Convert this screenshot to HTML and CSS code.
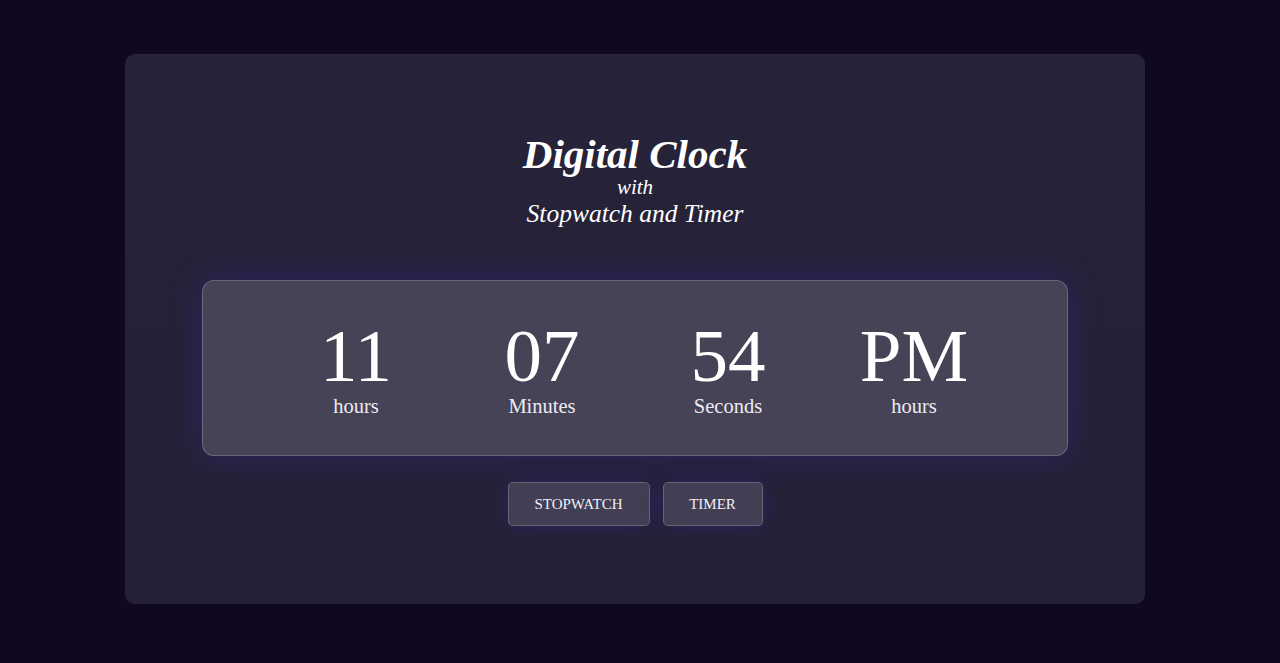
FILE: index.html
```html
<!DOCTYPE html>
<html lang="en">
<head>
<meta charset="utf-8">
<title>Digital Clock</title>
<link rel="stylesheet" href="styles.css">
</head>
<body>
<div class="page">
  <main class="card">
    <header class="heading">
      <h1 class="title">Digital Clock</h1>
      <div class="with">with</div>
      <div class="subtitle">Stopwatch and Timer</div>
    </header>
    <section class="clock">
      <div class="unit"><div class="value">11</div><div class="label">hours</div></div>
      <div class="unit"><div class="value">07</div><div class="label">Minutes</div></div>
      <div class="unit"><div class="value">54</div><div class="label">Seconds</div></div>
      <div class="unit"><div class="value">PM</div><div class="label">hours</div></div>
    </section>
    <nav class="actions">
      <button class="btn btn-stopwatch">STOPWATCH</button>
      <button class="btn btn-timer">TIMER</button>
    </nav>
  </main>
</div>
</body>
</html>
```
FILE: styles.css
```css
* { box-sizing: border-box; }
html, body {
  margin: 0;
  padding: 0;
  background: #0f0820;
  height: 100%;
}
body {
  font-family: "Liberation Serif", "Times New Roman", serif;
  color: #ffffff;
}
.page {
  display: flex;
  justify-content: center;
  padding: 54px 10px 0 0;
}
.card {
  width: 1020px;
  height: 550px;
  background: linear-gradient(180deg, #26233a 0%, #242136 100%);
  border-radius: 10px;
  padding-top: 78px;
  display: flex;
  flex-direction: column;
  align-items: center;
}
.heading {
  text-align: center;
}
.title {
  margin: 0;
  font-size: 41px;
  line-height: 44px;
  font-style: italic;
  font-weight: bold;
}
.with {
  font-size: 21px;
  line-height: 23px;
  font-style: italic;
}
.subtitle {
  font-size: 25.5px;
  line-height: 29px;
  font-style: italic;
}
.clock {
  margin-top: 52px;
  width: 866px;
  height: 176px;
  background: #474357;
  border: 1px solid rgba(255, 255, 255, 0.2);
  border-radius: 12px;
  box-shadow: 0 0 30px rgba(55, 40, 150, 0.45);
  display: grid;
  grid-template-columns: repeat(4, 186px);
  justify-content: center;
  align-content: start;
  padding-top: 38px;
}
.unit {
  text-align: center;
}
.value {
  font-size: 75px;
  line-height: 73px;
  color: #ffffff;
}
.label {
  margin-top: 2px;
  font-size: 20.5px;
  line-height: 24px;
  color: #ecebf2;
}
.actions {
  margin-top: 26px;
  display: flex;
  gap: 13px;
}
.btn {
  height: 44px;
  font-family: "Liberation Serif", "Times New Roman", serif;
  font-size: 15px;
  color: #f1f0f6;
  background: #423e54;
  border: 1px solid rgba(255, 255, 255, 0.2);
  border-radius: 5px;
  box-shadow: 0 0 20px rgba(55, 40, 150, 0.4);
  padding: 0;
}
.btn-stopwatch { width: 142px; }
.btn-timer { width: 100px; }
```
